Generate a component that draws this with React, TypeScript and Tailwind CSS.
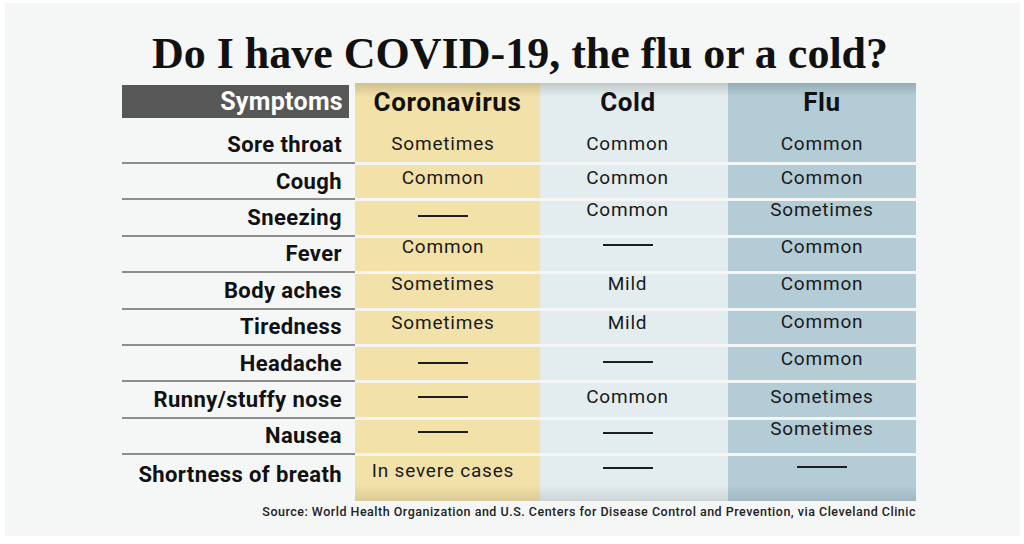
type Cell = { text: string; shift: string };

const rows: { label: string; cells: Cell[] }[] = [
  { label: "Sore throat", cells: [{ text: "Sometimes", shift: "" }, { text: "Common", shift: "" }, { text: "Common", shift: "" }] },
  { label: "Cough", cells: [{ text: "Common", shift: "-translate-y-[3px]" }, { text: "Common", shift: "-translate-y-[3px]" }, { text: "Common", shift: "-translate-y-[3px]" }] },
  { label: "Sneezing", cells: [{ text: "-", shift: "-translate-y-[2px]" }, { text: "Common", shift: "-translate-y-[8px]" }, { text: "Sometimes", shift: "-translate-y-[8px]" }] },
  { label: "Fever", cells: [{ text: "Common", shift: "-translate-y-[7px]" }, { text: "-", shift: "-translate-y-[9px]" }, { text: "Common", shift: "-translate-y-[7px]" }] },
  { label: "Body aches", cells: [{ text: "Sometimes", shift: "-translate-y-[7px]" }, { text: "Mild", shift: "-translate-y-[7px]" }, { text: "Common", shift: "-translate-y-[7px]" }] },
  { label: "Tiredness", cells: [{ text: "Sometimes", shift: "-translate-y-[4px]" }, { text: "Mild", shift: "-translate-y-[4px]" }, { text: "Common", shift: "-translate-y-[5px]" }] },
  { label: "Headache", cells: [{ text: "-", shift: "-translate-y-[1px]" }, { text: "-", shift: "-translate-y-[2px]" }, { text: "Common", shift: "-translate-y-[4px]" }] },
  { label: "Runny/stuffy nose", cells: [{ text: "-", shift: "-translate-y-[3px]" }, { text: "Common", shift: "-translate-y-[3px]" }, { text: "Sometimes", shift: "-translate-y-[3px]" }] },
  { label: "Nausea", cells: [{ text: "-", shift: "-translate-y-[4px]" }, { text: "-", shift: "-translate-y-[3px]" }, { text: "Sometimes", shift: "-translate-y-[7px]" }] },
  { label: "Shortness of breath", cells: [{ text: "In severe cases", shift: "-translate-y-[4px]" }, { text: "-", shift: "-translate-y-[5px]" }, { text: "-", shift: "-translate-y-[6px]" }] },
];

const colBg = ["bg-[#f2e1a8]", "bg-[#e3ecee]", "bg-[#b3ccd6]"];
const colPad = ["pr-[9px]", "pr-[13px]", "pr-0"];
const headPad = ["pr-0", "pr-[12px]", "pr-0"];

function Value({ text }: { text: string }) {
  if (text === "-") return <span className="block w-[50px] h-[2px] bg-[#1d1d1d]" />;
  return <span>{text}</span>;
}

export default function App() {
  return (
    <div className="w-[1024px] h-[544px] bg-white pt-[3px] pl-[5px] pr-[4px] pb-[8px]">
      <div className="h-full bg-[#f5f6f6] flex flex-col items-start" style={{ fontFamily: "Roboto, 'Liberation Sans', sans-serif" }}>
        <h1 className="self-center ml-[15px] mt-[27px] text-[44px] leading-[48px] font-bold text-[#111]" style={{ fontFamily: "'Liberation Serif', 'DejaVu Serif', serif" }}>
          Do I have COVID-19, the flu or a cold?
        </h1>
        <div className="mt-[5px] w-[794px] ml-[117px] grid grid-cols-[233px_185px_188px_188px]">
          {/* header */}
          <div className="h-[43px] pt-[2px] pr-[6px]">
            <div className="h-[33px] bg-[#575757] text-white text-[25px] font-bold tracking-[0.3px] flex items-center justify-end pr-[6px]">Symptoms</div>
          </div>
          {["Coronavirus", "Cold", "Flu"].map((h, i) => (
            <div key={h} className={`relative h-[43px] ${colBg[i]} ${headPad[i]} flex items-start justify-center pt-0 text-[26px] font-bold text-[#111] tracking-[0.6px]`}>
              <div className="absolute inset-x-0 top-0 h-[14px] bg-gradient-to-b from-black/15 to-transparent" />
              <span className="relative">{h}</span>
            </div>
          ))}
          {rows.map((r, ri) => {
            const first = ri === 0;
            const last = ri === rows.length - 1;
            const h = first ? "h-[36px]" : last ? "h-[48px]" : "h-[36.4px]";
            return (
              <div key={r.label} className="contents">
                <div className={`${h} ${first ? "" : "border-t-2 border-[#8d8d8d]"} ${last ? "items-start pt-[3px]" : "items-center"} flex justify-end pr-[13px] text-[22px] font-bold text-[#111] tracking-[0.4px]`}>
                  {r.label}
                </div>
                {r.cells.map((c, ci) => (
                  <div key={ci} className={`relative ${h} ${colBg[ci]} ${colPad[ci]} ${first ? "" : "border-t-[3px] border-[#f4f6f6]"} ${last ? "items-start pt-[5px]" : "items-center"} flex justify-center text-[19px] text-[#1a1a1a] tracking-[0.8px]`}>
                    {last && <div className="absolute inset-x-0 bottom-0 h-[16px] bg-gradient-to-t from-black/10 to-transparent" />}
                    <div className={`relative flex items-center min-h-[24px] ${c.shift}`}>
                      <Value text={c.text} />
                    </div>
                  </div>
                ))}
              </div>
            );
          })}
        </div>
        <div className="w-[794px] ml-[117px] flex justify-end mt-[2px] text-[12.5px] font-medium text-[#222] tracking-[0.5px]">
          Source: World Health Organization and U.S. Centers for Disease Control and Prevention, via Cleveland Clinic
        </div>
      </div>
    </div>
  );
}
